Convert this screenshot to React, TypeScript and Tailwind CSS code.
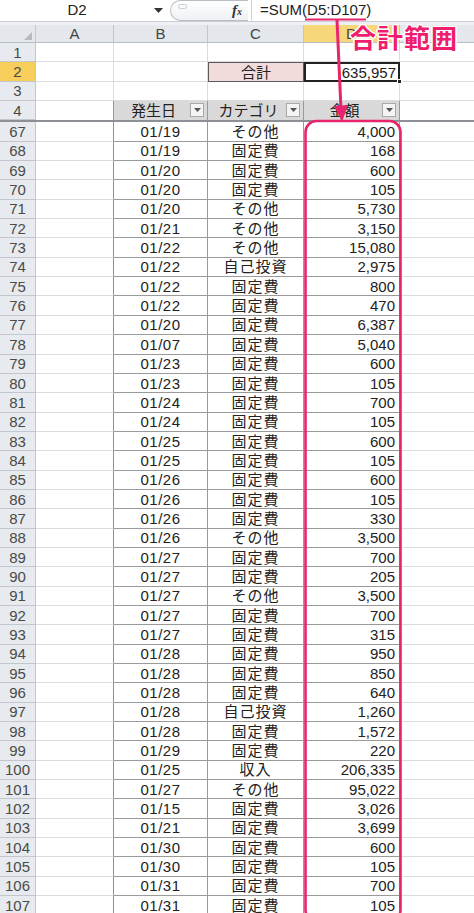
import React from "react";

type Row = { n: number; date: string; cat: string; amt: string };

const rows: Row[] = [
  { n: 67, date: "01/19", cat: "その他", amt: "4,000" },
  { n: 68, date: "01/19", cat: "固定費", amt: "168" },
  { n: 69, date: "01/20", cat: "固定費", amt: "600" },
  { n: 70, date: "01/20", cat: "固定費", amt: "105" },
  { n: 71, date: "01/20", cat: "その他", amt: "5,730" },
  { n: 72, date: "01/21", cat: "その他", amt: "3,150" },
  { n: 73, date: "01/22", cat: "その他", amt: "15,080" },
  { n: 74, date: "01/22", cat: "自己投資", amt: "2,975" },
  { n: 75, date: "01/22", cat: "固定費", amt: "800" },
  { n: 76, date: "01/22", cat: "固定費", amt: "470" },
  { n: 77, date: "01/20", cat: "固定費", amt: "6,387" },
  { n: 78, date: "01/07", cat: "固定費", amt: "5,040" },
  { n: 79, date: "01/23", cat: "固定費", amt: "600" },
  { n: 80, date: "01/23", cat: "固定費", amt: "105" },
  { n: 81, date: "01/24", cat: "固定費", amt: "700" },
  { n: 82, date: "01/24", cat: "固定費", amt: "105" },
  { n: 83, date: "01/25", cat: "固定費", amt: "600" },
  { n: 84, date: "01/25", cat: "固定費", amt: "105" },
  { n: 85, date: "01/26", cat: "固定費", amt: "600" },
  { n: 86, date: "01/26", cat: "固定費", amt: "105" },
  { n: 87, date: "01/26", cat: "固定費", amt: "330" },
  { n: 88, date: "01/26", cat: "その他", amt: "3,500" },
  { n: 89, date: "01/27", cat: "固定費", amt: "700" },
  { n: 90, date: "01/27", cat: "固定費", amt: "205" },
  { n: 91, date: "01/27", cat: "その他", amt: "3,500" },
  { n: 92, date: "01/27", cat: "固定費", amt: "700" },
  { n: 93, date: "01/27", cat: "固定費", amt: "315" },
  { n: 94, date: "01/28", cat: "固定費", amt: "950" },
  { n: 95, date: "01/28", cat: "固定費", amt: "850" },
  { n: 96, date: "01/28", cat: "固定費", amt: "640" },
  { n: 97, date: "01/28", cat: "自己投資", amt: "1,260" },
  { n: 98, date: "01/28", cat: "固定費", amt: "1,572" },
  { n: 99, date: "01/29", cat: "固定費", amt: "220" },
  { n: 100, date: "01/25", cat: "収入", amt: "206,335" },
  { n: 101, date: "01/27", cat: "その他", amt: "95,022" },
  { n: 102, date: "01/15", cat: "固定費", amt: "3,026" },
  { n: 103, date: "01/21", cat: "固定費", amt: "3,699" },
  { n: 104, date: "01/30", cat: "固定費", amt: "600" },
  { n: 105, date: "01/30", cat: "固定費", amt: "105" },
  { n: 106, date: "01/31", cat: "固定費", amt: "700" },
  { n: 107, date: "01/31", cat: "固定費", amt: "105" },
];

const font = "font-['Liberation_Sans','Noto_Sans_CJK_JP',sans-serif]";

// column widths: header, A, B, C, D, E
const W = {
  h: "w-[36px] shrink-0",
  a: "w-[78px] shrink-0",
  b: "w-[94px] shrink-0",
  c: "w-[96px] shrink-0",
  d: "w-[96px] shrink-0",
  e: "flex-1",
};

const rowH = "h-[19.35px]";
const grid = "border-r border-b border-[#dadcdf]";
const tbl = "border-r border-b border-[#9a9a9a]";

function RowHead({ n, active }: { n: number | string; active?: boolean }) {
  return (
    <div
      className={`${W.h} ${rowH} flex items-center justify-center border-r border-b border-[#c3c7cd] text-[15px] leading-none text-[#4a4a4a] ${
        active ? "bg-[#f7cd5c]" : "bg-[#e7eaee]"
      }`}
    >
      {n}
    </div>
  );
}

function Filter() {
  return (
    <span className="absolute right-[3px] top-[2px] flex h-[14px] w-[14px] items-center justify-center border border-[#a9a9a9] bg-[#f4f4f4]">
      <svg width="7" height="4" viewBox="0 0 7 4">
        <path d="M0 0h7L3.5 4z" fill="#555" />
      </svg>
    </span>
  );
}

export default function App() {
  return (
    <div className={`relative h-[913px] w-[474px] overflow-hidden bg-white text-[#222] ${font}`}>
      {/* formula bar */}
      <div className="flex h-[21px] items-center bg-white text-[15px]">
        <div className="flex w-[152px] justify-center pl-[2px]">D2</div>
        <svg width="9" height="5" viewBox="0 0 9 5" className="ml-[2px]">
          <path d="M0 0h9L4.5 5z" fill="#333" />
        </svg>
        <div className="ml-[7px] flex h-[21px] w-[78px] items-center justify-end rounded-l-full border-l border-t border-b border-[#b9bec6] bg-gradient-to-b from-white to-[#eef1f4] pr-[6px]">
          <span className="mr-auto ml-[7px] -mt-[8px] block h-[5px] w-[9px] rounded-full border border-[#c7ccd3]" />
          <span className="font-['Liberation_Serif',serif] text-[15px] font-bold italic text-[#333]">
            f<span className="text-[10px]">x</span>
          </span>
        </div>
        <div className="ml-[3px] h-[21px] border-l border-[#d0d4da]" />
        <div className="ml-[8px]">=SUM(D5:D107)</div>
      </div>
      <div className="h-[4px] border-t border-[#c9ced6] bg-[#eef0f3]" />

      {/* column headers */}
      <div className="flex h-[18px] border-b border-[#b8bdc4] bg-[#e4e7eb] text-[15px] leading-none text-[#444]">
        <div className={`${W.h} flex items-end justify-end border-r border-[#c3c7cd] pr-[3px] pb-[2px]`}>
          <svg width="8" height="8" viewBox="0 0 8 8">
            <path d="M8 0v8H0z" fill="#b6bac0" />
          </svg>
        </div>
        <div className={`${W.a} flex items-center justify-center border-r border-[#c3c7cd]`}>A</div>
        <div className={`${W.b} flex items-center justify-center border-r border-[#c3c7cd]`}>B</div>
        <div className={`${W.c} flex items-center justify-center border-r border-[#c3c7cd]`}>C</div>
        <div className={`${W.d} flex items-center justify-center border-r border-[#c3c7cd] bg-[#f8d67a]`}>D</div>
        <div className={`${W.e} flex items-center justify-center`}>E</div>
      </div>

      {/* row 1 */}
      <div className="flex">
        <RowHead n={1} />
        <div className={`${W.a} ${rowH} ${grid}`} />
        <div className={`${W.b} ${rowH} ${grid}`} />
        <div className={`${W.c} ${rowH} ${grid}`} />
        <div className={`${W.d} ${rowH} ${grid}`} />
        <div className={`${W.e} ${rowH} border-b border-[#dadcdf]`} />
      </div>

      {/* row 2 */}
      <div className="flex text-[15px]">
        <RowHead n={2} active />
        <div className={`${W.a} ${rowH} ${grid}`} />
        <div className={`${W.b} ${rowH} ${grid}`} />
        <div className={`${W.c} ${rowH} flex items-center justify-center border border-[#5a5a5a] bg-[#f2dcdb] leading-none`}>
          合計
        </div>
        <div className={`${W.d} ${rowH} relative flex items-center justify-end border-2 border-[#222] pr-[2px] leading-none`}>
          635,957
          <span className="absolute -right-[4px] -bottom-[4px] h-[5px] w-[5px] border border-white bg-[#222]" />
        </div>
        <div className={`${W.e} ${rowH} border-b border-[#dadcdf]`} />
      </div>

      {/* row 3 */}
      <div className="flex">
        <RowHead n={3} />
        <div className={`${W.a} ${rowH} ${grid}`} />
        <div className={`${W.b} ${rowH} ${grid}`} />
        <div className={`${W.c} ${rowH} ${grid}`} />
        <div className={`${W.d} ${rowH} ${grid}`} />
        <div className={`${W.e} ${rowH} border-b border-[#dadcdf]`} />
      </div>

      {/* row 4: table header */}
      <div className="flex border-b-2 border-[#8d9096] text-[15px] leading-none">
        <RowHead n={4} />
        <div className={`${W.a} ${rowH} border-r border-[#9a9a9a]`} />
        <div className={`${W.b} ${rowH} relative flex items-center justify-center border-r border-[#9a9a9a] bg-[#d9d9d9] pr-[14px]`}>
          発生日
          <Filter />
        </div>
        <div className={`${W.c} ${rowH} relative flex items-center justify-center border-r border-[#9a9a9a] bg-[#d9d9d9] pr-[14px]`}>
          カテゴリ
          <Filter />
        </div>
        <div className={`${W.d} ${rowH} relative flex items-center justify-center border-r border-[#9a9a9a] bg-[#d9d9d9] pr-[14px]`}>
          金額
          <Filter />
        </div>
        <div className={`${W.e} ${rowH}`} />
      </div>

      {/* data rows */}
      {rows.map((r) => (
        <div key={r.n} className="flex text-[15px] leading-none">
          <RowHead n={r.n} />
          <div className={`${W.a} ${rowH} border-b border-r border-[#dadcdf] border-r-[#8f8f8f]`} />
          <div className={`${W.b} ${rowH} ${tbl} flex items-center justify-center tracking-[0.5px]`}>{r.date}</div>
          <div className={`${W.c} ${rowH} ${tbl} flex items-center justify-center tracking-[1px]`}>{r.cat}</div>
          <div className={`${W.d} ${rowH} ${tbl} flex items-center justify-end pr-[4px]`}>{r.amt}</div>
          <div className={`${W.e} ${rowH} border-b border-[#dadcdf]`} />
        </div>
      ))}

      {/* annotation overlay */}
      <svg className="pointer-events-none absolute inset-0" width="474" height="913" viewBox="0 0 474 913">
        <line x1="305" y1="19.5" x2="366" y2="19.5" stroke="#e8246c" strokeWidth="2" />
        <rect x="305.5" y="121" width="95" height="800" rx="11" fill="none" stroke="#e8246c" strokeWidth="2.6" />
        <line x1="337" y1="20" x2="341" y2="110" stroke="#e8246c" strokeWidth="3" />
        <path d="M334 106 L348 105 L342 122 Z" fill="#e8246c" />
      </svg>
      <div className="absolute left-[350px] top-[26px] text-[26px] font-bold leading-none tracking-[1px] text-[#ee1d6e] [text-shadow:_1.5px_0_0_#fff,_-1.5px_0_0_#fff,_0_1.5px_0_#fff,_0_-1.5px_0_#fff,_1px_1px_0_#fff,_-1px_-1px_0_#fff,_1px_-1px_0_#fff,_-1px_1px_0_#fff]">
        合計範囲
      </div>
    </div>
  );
}
